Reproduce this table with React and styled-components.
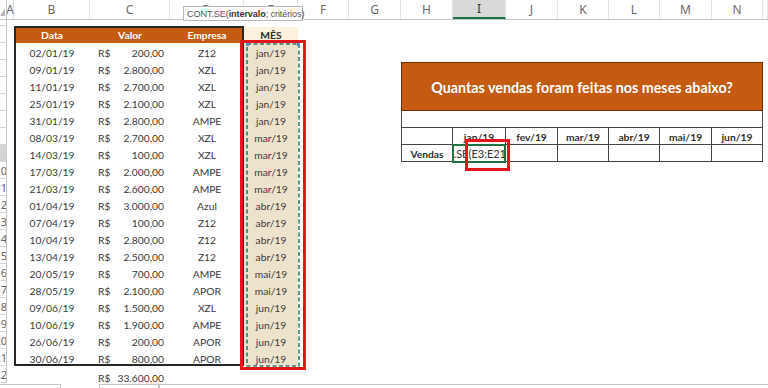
import React from 'react'
import styled, { createGlobalStyle, css } from 'styled-components'

const GlobalStyle = createGlobalStyle`
  html, body { margin: 0; padding: 0; background: #fff; }
  body {
    width: 768px;
    height: 388px;
    overflow: hidden;
    font-family: Lato, "Liberation Sans", sans-serif;
  }
  * { box-sizing: border-box; }
`

// row header, A, B ... N, O
const COLS = '7px 7px 76px 80px 74px 54px 51px 52px 52px 53px 52px 51px 51px 52px 51px 5px'

const place = css`
  grid-column: ${p => p.$c};
  grid-row: ${p => p.$r};
`

const Sheet = styled.div`
  position: relative;
  width: 768px;
  height: 388px;
  overflow: hidden;
  background: #fff;
  display: flex;
  flex-direction: column;
`

const ColumnBar = styled.div`
  display: grid;
  grid-template-columns: ${COLS};
  height: 20px;
  border-bottom: 1px solid #c8c8c8;
`

const Corner = styled.div`
  position: relative;
  border-right: 1px solid #c8c8c8;
  &::after {
    content: '';
    position: absolute;
    right: 1px;
    bottom: 3px;
    border-style: solid;
    border-width: 0 0 8px 5px;
    border-color: transparent transparent #b9b9b9 transparent;
  }
`

const ColLetter = styled.div`
  display: flex;
  align-items: center;
  justify-content: center;
  font-family: "Noto Sans", sans-serif;
  font-size: 12px;
  color: #6a6a6a;
  border-right: 1px solid #e4e4e4;
  ${p => p.$active && css`
    background: #d9d9d9;
    border-bottom: 2px solid #217346;
    color: #333;
  `}
`

const Grid = styled.div`
  display: grid;
  grid-template-columns: ${COLS};
  grid-template-rows: 6px repeat(21, 17px);
  font-size: 10.3px;
  color: #3a3a3a;
`

const RowHead = styled.div`
  ${place}
  display: flex;
  align-items: center;
  justify-content: flex-end;
  overflow: hidden;
  border-bottom: 1px solid #d6d6d6;
  border-right: 1px solid #c8c8c8;
  background: ${p => (p.$active ? '#d4d4d4' : '#fff')};
  font-family: "Noto Sans", sans-serif;
  font-size: 11px;
  color: #666;
  span {
    white-space: nowrap;
    margin-right: -1px;
  }
`

const Cell = styled.div`
  ${place}
  display: flex;
  align-items: center;
  justify-content: center;
  padding-top: 2px;
  white-space: nowrap;
`

const HeadCell = styled(Cell)`
  padding-top: 0;
  margin-top: 1px;
  background: #c55a11;
  color: #fff;
  font-weight: 700;
`

const MonthHead = styled(Cell)`
  padding-top: 0;
  margin-top: 1px;
  background: #fcf1dc;
  color: #2e2e2e;
  font-weight: 700;
`

const MoneyCell = styled(Cell)`
  justify-content: space-between;
  padding: 2px 6px 0 8px;
`

const TotalCell = styled(MoneyCell)`
  padding-top: 6px;
`

const MonthCell = styled(Cell)`
  background: #ede3cc;
`

const TableFrame = styled.div`
  ${place}
  border: 2px solid #262626;
  pointer-events: none;
`

const Banner = styled.div`
  ${place}
  margin-top: 2px;
  display: flex;
  align-items: center;
  justify-content: center;
  background: #c55a11;
  border: 1px solid #6b3008;
  color: #fff;
  font-weight: 700;
  font-size: 14.3px;
  padding-top: 2px;
`

const BlankRow = styled.div`
  ${place}
  border: 1px solid #444;
  border-top: none;
`

const PanelCell = styled(Cell)`
  border-right: 1px solid #444;
  border-bottom: 1px solid #444;
  ${p => p.$first && css`border-left: 1px solid #444;`}
  font-weight: ${p => (p.$bold ? 700 : 400)};
  color: #2e2e2e;
`

const EditCell = styled.div`
  ${place}
  position: relative;
  margin: -1px 0 -1px -1px;
  border: 2px solid #217346;
  background: #fff;
  color: #333;
  font-size: 11px;
`

const EditClip = styled.div`
  position: absolute;
  inset: 0 -7px 0 0;
  overflow: hidden;
  span {
    position: absolute;
    right: 5px;
    top: 1px;
    white-space: nowrap;
  }
`

const TabStrip = styled.div`
  display: flex;
  height: 5px;
  margin-top: 1px;
  border-top: 1px solid #c4c4c4;
`

const TabGap = styled.div`
  width: ${p => p.$w}px;
  border-left: 1px solid #c4c4c4;
  border-right: 1px solid #c4c4c4;
  margin-top: -1px;
  background: #fff;
`

const Spacer = styled.div`
  width: ${p => p.$w}px;
`

const Tooltip = styled.div`
  position: absolute;
  left: 183px;
  top: 6px;
  height: 15px;
  width: 120px;
  padding: 0 3px;
  display: flex;
  align-items: center;
  background: #fff;
  border: 1px solid #b9b9b9;
  font-family: "Liberation Sans", sans-serif;
  font-size: 9.1px;
  color: #555;
  white-space: nowrap;
  letter-spacing: -0.1px;
  b { color: #333; }
`

const RedFrame = styled.div`
  position: absolute;
  left: ${p => p.$x}px;
  top: ${p => p.$y}px;
  width: ${p => p.$w}px;
  height: ${p => p.$h}px;
  border: 3px solid #e3161c;
  pointer-events: none;
`

const Ants = styled.svg`
  position: absolute;
  left: 246px;
  top: 43px;
  overflow: visible;
  pointer-events: none;
`

const letters = ['A', 'B', 'C', 'D', 'E', 'F', 'G', 'H', 'I', 'J', 'K', 'L', 'M', 'N', '']

const rows = [
  ['02/01/19', '200,00', 'Z12', 'jan/19'],
  ['09/01/19', '2.800,00', 'XZL', 'jan/19'],
  ['11/01/19', '2.700,00', 'XZL', 'jan/19'],
  ['25/01/19', '2.100,00', 'XZL', 'jan/19'],
  ['31/01/19', '2.800,00', 'AMPE', 'jan/19'],
  ['08/03/19', '2.700,00', 'XZL', 'mar/19'],
  ['14/03/19', '100,00', 'XZL', 'mar/19'],
  ['17/03/19', '2.000,00', 'AMPE', 'mar/19'],
  ['21/03/19', '2.600,00', 'AMPE', 'mar/19'],
  ['01/04/19', '3.000,00', 'Azul', 'abr/19'],
  ['07/04/19', '100,00', 'Z12', 'abr/19'],
  ['10/04/19', '2.800,00', 'Z12', 'abr/19'],
  ['13/04/19', '2.500,00', 'Z12', 'abr/19'],
  ['20/05/19', '700,00', 'AMPE', 'mai/19'],
  ['28/05/19', '2.100,00', 'APOR', 'mai/19'],
  ['09/06/19', '1.500,00', 'XZL', 'jun/19'],
  ['10/06/19', '1.900,00', 'AMPE', 'jun/19'],
  ['26/06/19', '200,00', 'APOR', 'jun/19'],
  ['30/06/19', '800,00', 'APOR', 'jun/19'],
]

const months = ['jan/19', 'fev/19', 'mar/19', 'abr/19', 'mai/19', 'jun/19']

export default function App() {
  return (
    <Sheet>
      <GlobalStyle />
      <ColumnBar>
        <Corner />
        {letters.map((l, i) => (
          <ColLetter key={i} $active={l === 'I'}>{l}</ColLetter>
        ))}
      </ColumnBar>

      <Grid>
        {Array.from({ length: 22 }, (_, i) => i + 1).map(n => (
          <RowHead key={n} $c={1} $r={n} $active={n === 9}>
            {n >= 10 && <span>{n}</span>}
          </RowHead>
        ))}

        <HeadCell $c={3} $r={2}>Data</HeadCell>
        <HeadCell $c={4} $r={2}>Valor</HeadCell>
        <HeadCell $c={5} $r={2}>Empresa</HeadCell>
        <MonthHead $c={6} $r={2}>MÊS</MonthHead>

        {rows.map(([data, valor, empresa, mes], i) => (
          <React.Fragment key={i}>
            <Cell $c={3} $r={i + 3}>{data}</Cell>
            <MoneyCell $c={4} $r={i + 3}><span>R$</span><span>{valor}</span></MoneyCell>
            <Cell $c={5} $r={i + 3}>{empresa}</Cell>
            <MonthCell $c={6} $r={i + 3}>{mes}</MonthCell>
          </React.Fragment>
        ))}
        <TableFrame $c="3 / 6" $r="2 / 22" />
        <TotalCell $c={4} $r={22}><span>R$</span><span>33.600,00</span></TotalCell>

        <Banner $c="9 / 16" $r="4 / 7">Quantas vendas foram feitas nos meses abaixo?</Banner>
        <BlankRow $c="9 / 16" $r={7} />
        <PanelCell $c={9} $r={8} $first />
        {months.map((m, i) => (
          <PanelCell key={m} $c={10 + i} $r={8} $bold>{m}</PanelCell>
        ))}
        <PanelCell $c={9} $r={9} $first $bold>Vendas</PanelCell>
        {months.slice(1).map((m, i) => (
          <PanelCell key={m} $c={11 + i} $r={9} />
        ))}
        <EditCell $c={10} $r={9}>
          <EditClip><span>=CONT.SE(E3:E21</span></EditClip>
        </EditCell>
      </Grid>

      <TabStrip>
        <Spacer $w={60} />
        <TabGap $w={40} />
        <Spacer $w={58} />
        <TabGap $w={0} />
      </TabStrip>

      <Tooltip>CONT.SE(<b>intervalo</b>; critérios)</Tooltip>

      <Ants width="54" height="324">
        <rect x="1" y="1" width="52" height="322" fill="none" stroke="#2c7a6c" strokeWidth="1.6" strokeDasharray="4 2.5" />
        <rect x="0" y="0" width="3" height="3" fill="#4f86d8" />
        <rect x="51" y="0" width="3" height="3" fill="#4f86d8" />
      </Ants>

      <RedFrame $x={240} $y={40} $w={66} $h={330} />
      <RedFrame $x={465} $y={139} $w={45} $h={32} />
    </Sheet>
  )
}
